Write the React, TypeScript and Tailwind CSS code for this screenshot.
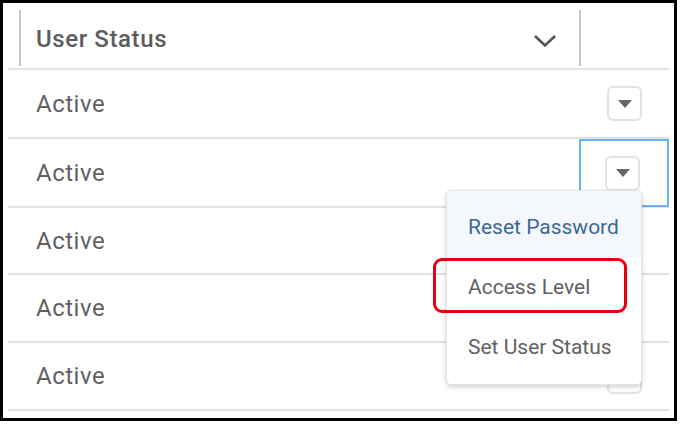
import React from "react";

const Tri = () => (
  <svg width="14" height="8" viewBox="0 0 14 8">
    <path d="M0 0 H14 L7 8 Z" fill="#666666" />
  </svg>
);

const DropBtn = () => (
  <div className="ml-[26px] w-[35px] h-[35px] rounded-[6px] border-2 border-[#e2e2e2] bg-white flex items-center justify-center">
    <Tri />
  </div>
);

const rows = [
  { h: "h-[69px]", focus: false },
  { h: "h-[69px]", focus: true },
  { h: "h-[67px]", focus: false },
  { h: "h-[68px]", focus: false },
  { h: "h-[68px]", focus: false },
];

export default function App() {
  return (
    <div className="w-[681px] h-[424px] bg-white">
      <div className="relative w-[677px] h-[421px] border-[3px] border-black px-[5px] font-['Roboto',sans-serif]">
        <div className="flex h-[67px] border-b-2 border-[#e3e3e3]">
          <div className="ml-[11px] mt-[7px] w-[2px] h-[56px] bg-[#c9c9c9]" />
          <div className="flex-1 flex items-center pt-[7px] pl-[15px] text-[24px] tracking-[0.6px] font-medium text-[#5c5c5c]">
            User Status
          </div>
          <div className="flex items-start pt-[31px] mr-[22px]">
            <svg width="24" height="14" viewBox="0 0 24 14">
              <path d="M2 2 L12 11.5 L22 2" fill="none" stroke="#555555" strokeWidth="2.6" />
            </svg>
          </div>
          <div className="mt-[7px] w-[2px] h-[56px] bg-[#c9c9c9]" />
          <div className="w-[88px]" />
        </div>
        {rows.map((r, i) => (
          <div key={i} className={`flex ${r.h} border-b-2 border-[#e3e3e3]`}>
            <div className="flex-1 flex items-center pl-[28px] text-[24px] tracking-[0.5px] text-[#616161]">Active</div>
            <div
              className={`w-[88px] flex items-center ${r.focus ? "border-2 border-[#6cb2f5] -ml-[2px] w-[90px] -mb-[1px]" : ""}`}
            >
              {r.focus ? (
                <div className="ml-[24px] w-[35px] h-[35px] rounded-[6px] border-2 border-[#e2e2e2] bg-white flex items-center justify-center">
                  <Tri />
                </div>
              ) : (
                <DropBtn />
              )}
            </div>
          </div>
        ))}
        <div className="absolute left-[443px] top-[187px] w-[196px] h-[195px] rounded-[5px] border border-[#e4e4e4] bg-white shadow-[0_2px_5px_rgba(0,0,0,0.18)] overflow-hidden text-[21px]">
          <div className="h-[67px] pt-[7px] bg-[#f4f8fc] flex items-center pl-[21px] text-[#3d6798]">
            Reset Password
          </div>
          <div className="h-[60px] flex items-center pl-[21px] text-[#616161]">Access Level</div>
          <div className="h-[60px] flex items-center pl-[21px] text-[#616161]">Set User Status</div>
        </div>
        <div className="absolute left-[430px] top-[255px] w-[194px] h-[55px] rounded-[9px] border-[3px] border-[#e60012]" />
      </div>
    </div>
  );
}
